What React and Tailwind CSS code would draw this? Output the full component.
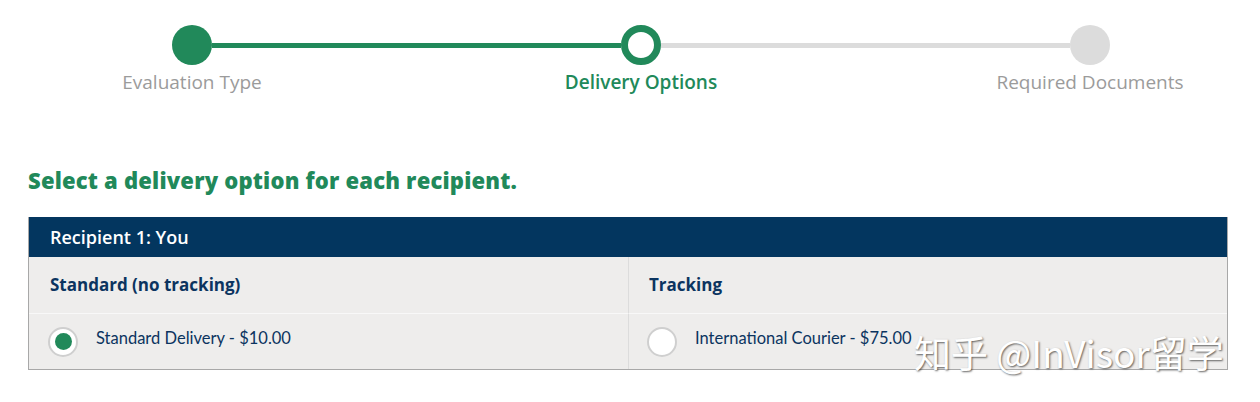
import React from "react";

export default function App() {
  const green = "text-[#21895a]";
  return (
    <div className="relative w-[1260px] h-[402px] bg-white overflow-hidden" style={{ fontFamily: "'Open Sans', sans-serif" }}>
      {/* stepper */}
      <div className="pt-[25px] flex items-center pl-[172px] pr-[150px]">
        <div className="w-[40px] h-[40px] rounded-full bg-[#21895a] shrink-0" />
        <div className="flex-1 h-[5px] bg-[#21895a]" />
        <div className="w-[40px] h-[40px] rounded-full border-[7px] border-[#21895a] bg-white shrink-0" />
        <div className="flex-1 h-[5px] bg-[#dcdcdc]" />
        <div className="w-[40px] h-[40px] rounded-full bg-[#dcdcdc] shrink-0" />
      </div>
      <div className="flex justify-between pl-[92px] pr-[70px] mt-[5px] text-[19px] leading-[24px]">
        <div className="w-[200px] text-center text-[#9b9b9b] whitespace-nowrap">Evaluation Type</div>
        <div className={"w-[200px] text-center font-semibold whitespace-nowrap " + green}>Delivery Options</div>
        <div className="w-[200px] text-center text-[#9b9b9b] whitespace-nowrap">Required Documents</div>
      </div>

      {/* heading */}
      <h2 className={"ml-[28px] mt-[71px] text-[22px] leading-[30px] font-extrabold tracking-[0.2px] " + green}>
        Select a delivery option for each recipient.
      </h2>

      {/* table */}
      <div className="ml-[28px] mt-[22px] w-[1200px] border-x border-b border-[#a8a8a8]">
        <div className="h-[40px] bg-[#03365f] flex items-center px-[21px] text-white text-[18px] font-semibold">
          Recipient 1: You
        </div>
        <div className="grid grid-cols-[600px_1fr] bg-[#eeedec]">
          <div className="h-[57px] flex items-center px-[21px] border-r border-[#dcdcdc] border-b border-b-[#f8f8f8] text-[#0b3460] font-bold text-[17px]">
            Standard (no tracking)
          </div>
          <div className="h-[57px] flex items-center px-[20px] border-b border-[#f8f8f8] text-[#0b3460] font-bold text-[17px]">
            Tracking
          </div>
          <div className="h-[55px] flex items-center px-[19px] gap-[18px] border-r border-[#dcdcdc] text-[#0b3460] text-[16.5px]" style={{ fontFamily: "Lato, sans-serif" }}>
            <div className="w-[30px] h-[30px] rounded-full bg-white border-2 border-[#cfcfcf] flex items-center justify-center shrink-0">
              <div className="w-[17px] h-[17px] rounded-full bg-[#21895a]" />
            </div>
            <span className="mb-[6px]">Standard Delivery - $10.00</span>
          </div>
          <div className="h-[55px] flex items-center px-[18px] gap-[18px] text-[#0b3460] text-[16.5px]" style={{ fontFamily: "Lato, sans-serif" }}>
            <div className="w-[30px] h-[30px] rounded-full bg-white border-2 border-[#cfcfcf] shrink-0" />
            <span className="mb-[6px]">International Courier - $75.00</span>
          </div>
        </div>
      </div>

      {/* watermark */}
      <div
        className="absolute left-[914px] top-[328px] text-white text-[37px] leading-[48px] whitespace-nowrap [text-shadow:1px_1px_2px_rgba(0,0,0,0.6)]"
        style={{ fontFamily: "'Noto Sans CJK SC', sans-serif" }}
      >
        知乎 @InVisor留学
      </div>
    </div>
  );
}
